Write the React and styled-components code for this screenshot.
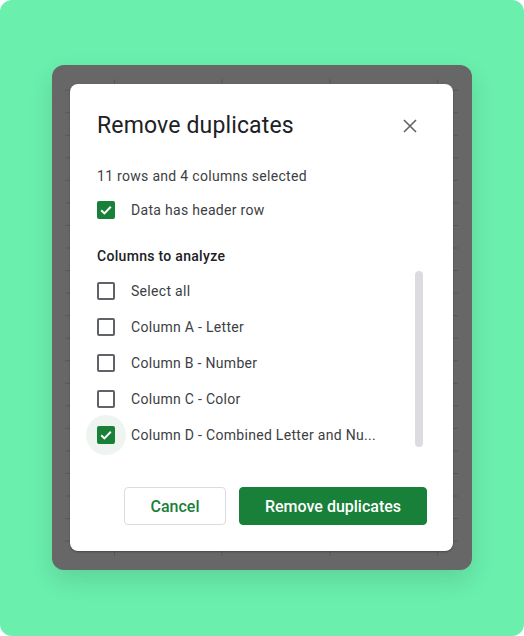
import React from "react";
import styled, { createGlobalStyle } from "styled-components";

const Global = createGlobalStyle`
  html, body { margin: 0; padding: 0; background: #ffffff; }
  body { font-family: Roboto, "Liberation Sans", Arial, sans-serif; }
  * { box-sizing: border-box; }
`;

const Page = styled.div`
  width: 524px;
  height: 636px;
  border-radius: 12px;
  background: #6aefad;
  display: flex;
  justify-content: center;
  align-items: flex-start;
  padding-top: 65px;
`;

const Frame = styled.div`
  width: 420px;
  height: 505px;
  border-radius: 12px;
  background: #676767;
  box-shadow: 0 10px 24px rgba(0, 0, 0, 0.12);
  display: flex;
  align-items: flex-start;
  padding: 14px 0 0 13px;
`;

const GridHalo = styled.div`
  padding: 5px;
  background-image:
    linear-gradient(to right, #575757 1px, transparent 1px),
    linear-gradient(to bottom, #575757 1px, transparent 1px);
  background-size: 107.67px 100%, 100% 22.56px;
  background-position: 49px 0, 0 10.7px;
`;

const Dialog = styled.div`
  width: 383px;
  height: 467px;
  background: #ffffff;
  border-radius: 8px;
  box-shadow: 0 1px 2px rgba(0, 0, 0, 0.3);
  padding: 28px 26px 26px 27px;
  display: flex;
  flex-direction: column;
`;

const Header = styled.div`
  display: flex;
  align-items: center;
  justify-content: space-between;
  height: 28px;
`;

const Title = styled.h1`
  margin: 0;
  font-size: 23px;
  line-height: 28px;
  font-weight: 400;
  letter-spacing: 0.15px;
  color: #202124;
`;

const CloseButton = styled.button`
  width: 32px;
  height: 32px;
  border: none;
  background: transparent;
  padding: 0;
  margin-right: 1px;
  display: flex;
  align-items: center;
  justify-content: center;
  color: #5f6368;
`;

const Summary = styled.p`
  margin: 26px 0 0;
  font-size: 14px;
  line-height: 20px;
  letter-spacing: 0.3px;
  color: #3c4043;
`;

const Row = styled.label`
  display: flex;
  align-items: center;
  height: ${(p) => p.$h || 36}px;
  margin-top: ${(p) => p.$mt || 0}px;
  font-size: 14px;
  letter-spacing: 0.3px;
  color: #3c4043;
`;

const Box = styled.span`
  position: relative;
  flex: none;
  width: 18px;
  height: 18px;
  border-radius: 2px;
  border: 2px solid ${(p) => (p.$checked ? "#188038" : "#5f6368")};
  background: ${(p) => (p.$checked ? "#188038" : "transparent")};
  display: flex;
  align-items: center;
  justify-content: center;
  &::before {
    content: "";
    display: ${(p) => (p.$focus ? "block" : "none")};
    position: absolute;
    left: 50%;
    top: 50%;
    width: 40px;
    height: 40px;
    margin: -20px 0 0 -20px;
    border-radius: 50%;
    background: #eef5f0;
    z-index: -1;
  }
`;

const BoxWrap = styled.span`
  position: relative;
  z-index: 0;
  display: flex;
`;

const LabelText = styled.span`
  margin-left: 16px;
  white-space: nowrap;
`;

const SectionTitle = styled.h2`
  margin: 24px 0 0;
  font-size: 14px;
  line-height: 20px;
  font-weight: 500;
  letter-spacing: 0.3px;
  color: #202124;
`;

const ListArea = styled.div`
  display: flex;
  margin-top: 5px;
  margin-right: 4px;
  height: 176px;
`;

const List = styled.div`
  flex: 1;
  padding-top: 2px;
`;

const Scrollbar = styled.div`
  width: 8px;
  height: 176px;
  border-radius: 4px;
  background: #dadce0;
`;

const Footer = styled.div`
  margin-top: auto;
  display: flex;
  justify-content: flex-end;
  gap: 13px;
`;

const Button = styled.button`
  height: 38px;
  width: ${(p) => p.$w}px;
  border-radius: 4px;
  font-family: inherit;
  font-size: 16px;
  font-weight: 500;
  border: 1px solid ${(p) => (p.$primary ? "#188038" : "#dadce0")};
  background: ${(p) => (p.$primary ? "#188038" : "#ffffff")};
  color: ${(p) => (p.$primary ? "#ffffff" : "#188038")};
  padding: 0;
`;

const Check = () => (
  <svg width="14" height="14" viewBox="0 0 14 14">
    <path d="M2.2 7.3 L5.4 10.4 L11.8 3.8" fill="none" stroke="#fff" strokeWidth="2" />
  </svg>
);

const Checkbox = ({ checked, focus }) => (
  <BoxWrap>
    <Box $checked={checked} $focus={focus}>{checked && <Check />}</Box>
  </BoxWrap>
);

const columns = [
  { label: "Select all", checked: false },
  { label: "Column A - Letter", checked: false },
  { label: "Column B - Number", checked: false },
  { label: "Column C - Color", checked: false },
  { label: "Column D - Combined Letter and Nu...", checked: true, focus: true },
];

export default function App() {
  return (
    <>
      <Global />
      <Page>
        <Frame>
          <GridHalo>
            <Dialog>
              <Header>
                <Title>Remove duplicates</Title>
                <CloseButton aria-label="Close">
                  <svg width="14" height="14" viewBox="0 0 14 14">
                    <path d="M1 1 L13 13 M13 1 L1 13" stroke="#5f6368" strokeWidth="1.6" fill="none" />
                  </svg>
                </CloseButton>
              </Header>
              <Summary>11 rows and 4 columns selected</Summary>
              <Row $h={24} $mt={12}>
                <Checkbox checked />
                <LabelText>Data has header row</LabelText>
              </Row>
              <SectionTitle>Columns to analyze</SectionTitle>
              <ListArea>
                <List>
                  {columns.map((c) => (
                    <Row key={c.label}>
                      <Checkbox checked={c.checked} focus={c.focus} />
                      <LabelText>{c.label}</LabelText>
                    </Row>
                  ))}
                </List>
                <Scrollbar />
              </ListArea>
              <Footer>
                <Button $w={102}>Cancel</Button>
                <Button $primary $w={188}>Remove duplicates</Button>
              </Footer>
            </Dialog>
          </GridHalo>
        </Frame>
      </Page>
    </>
  );
}
